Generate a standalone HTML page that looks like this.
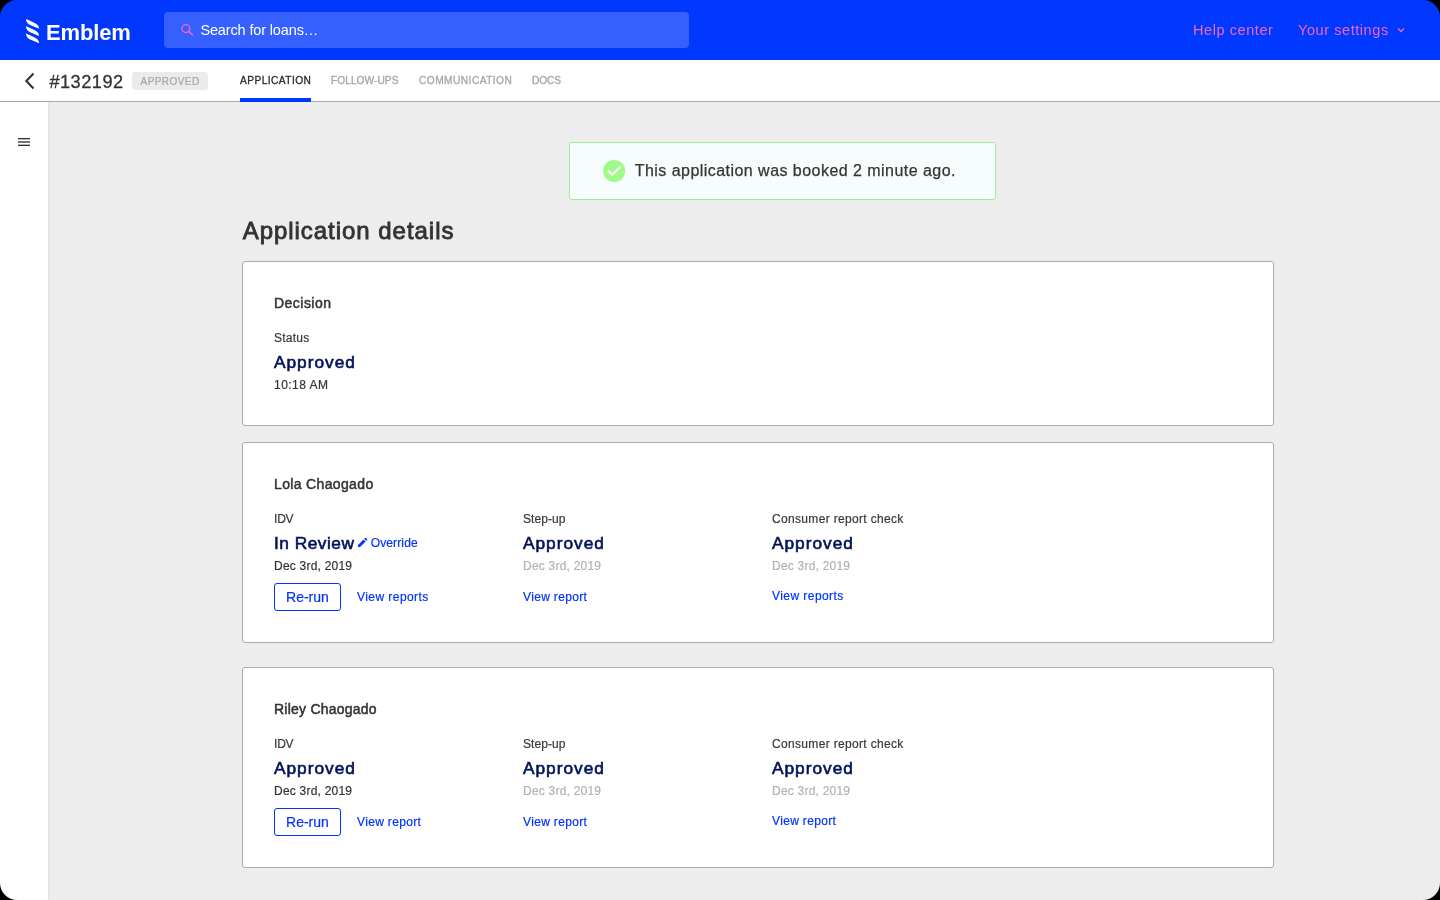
<!DOCTYPE html>
<html>
<head>
<meta charset="utf-8">
<title>Emblem - Application #132192</title>
<style>
  * { box-sizing: border-box; margin: 0; padding: 0; }
  html, body { width: 1440px; height: 900px; background: #000; overflow: hidden; }
  body { font-family: "Liberation Sans", sans-serif; color: #333; }
  .frame { will-change: transform; position: absolute; left: 0; top: 0; width: 1440px; height: 900px; }
  .contentbg { position: absolute; left: 48px; top: 102px; width: 1392px; height: 798px; background: #ededed; border-radius: 0 0 17px 0; }
  .abs { position: absolute; white-space: nowrap; line-height: 1; }

  /* top bar */
  .topbar { position: absolute; left: 0; top: 0; width: 1440px; height: 60px; background: #0038ff; border-radius: 17px 17px 0 0; }
  .logo-bg { position: absolute; left: 13px; top: 12px; width: 142px; height: 36px; background: #0137fc; }
  .search { position: absolute; left: 164.4px; top: 12px; width: 524.5px; height: 35.8px; border-radius: 4px; background: #3560ff; }
  .pink { color: #f765c6; }

  /* sub nav */
  .subnav { position: absolute; left: 0; top: 60px; width: 1440px; height: 42px; background: #fff; border-bottom: 1px solid #a9a9a9; }
  .badge { position: absolute; left: 132px; top: 12px; width: 76px; height: 18px; border-radius: 3px; background: #ebebeb; }
  .tab { font-size: 10.2px; color: #a6a6a6; -webkit-text-stroke: 0.3px #a6a6a6; }
  .tab.active { color: #2b2b2b; -webkit-text-stroke: 0.3px #2b2b2b; }
  .tabline { position: absolute; left: 240px; top: 38px; width: 71px; height: 4px; background: #0036ff; }

  /* side bar */
  .sidebar { position: absolute; left: 0; top: 102px; width: 48px; height: 798px; border-radius: 0 0 0 17px; background: #fff; box-shadow: 1px 0 2px rgba(40,40,70,0.068); }

  /* banner */
  .banner { position: absolute; left: 569px; top: 142px; width: 427px; height: 58px; border: 1px solid #9df08f; border-radius: 3px; background: #f7fdfd; }

  /* cards */
  .card { position: absolute; left: 242px; width: 1032px; background: #fff; border: 1px solid #ababab; border-radius: 3px; }
  .h { font-size: 14px; color: #333; -webkit-text-stroke: 0.5px #333; }
  .lbl { font-size: 12px; color: #383838; -webkit-text-stroke: 0.2px #383838; }
  .val { font-size: 17.3px; color: #00125a; -webkit-text-stroke: 0.62px #00125a; margin-top: 0.5px; }
  .date { font-size: 12px; color: #333; -webkit-text-stroke: 0.2px #333; }
  .date.dim { color: #b2b2b2; -webkit-text-stroke: 0.2px #b2b2b2; }
  .link { font-size: 12px; color: #0033ff; -webkit-text-stroke: 0.2px #0033ff; }
  .btn { position: absolute; width: 67px; height: 28px; border: 1px solid #0033ff; border-radius: 3px; background: #fff; }
</style>
</head>
<body>
<div class="frame">
  <div class="contentbg"></div>

  <!-- TOP BAR -->
  <div class="topbar">
    <div class="logo-bg"></div>
    <svg class="abs" style="left:26px;top:19px" width="14" height="25" viewBox="0 0 14 25">
      <path fill="#fff" d="M0,0 C5,2.3 9,3.9 11,5.4 C12.6,6.6 13,8 13,9.6 C9,7.9 5,6.6 2.8,5.2 C0.7,3.8 0,2 0,0 Z"/>
      <path fill="#fff" transform="translate(0 7.3)" d="M0,0 C5,2.3 9,3.9 11,5.4 C12.6,6.6 13,8 13,9.6 C9,7.9 5,6.6 2.8,5.2 C0.7,3.8 0,2 0,0 Z"/>
      <path fill="#fff" transform="translate(0 14.6)" d="M0,0 C5,2.3 9,3.9 11,5.4 C12.6,6.6 13,8 13,9.6 C9,7.9 5,6.6 2.8,5.2 C0.7,3.8 0,2 0,0 Z"/>
    </svg>
    <div class="abs" style="left:46px;top:21.6px;font-size:22px;font-weight:bold;color:#fff;letter-spacing:-0.15px">Emblem</div>
    <div class="search">
      <svg class="abs" style="left:16px;top:11px" width="15" height="15" viewBox="0 0 15 15">
        <circle cx="5.9" cy="5.6" r="3.95" fill="none" stroke="#f765c6" stroke-width="1.35"/>
        <path d="M8.7 8.4 L12.6 12.0" stroke="#f765c6" stroke-width="1.5" stroke-linecap="round"/>
      </svg>
      <div class="abs" style="left:36px;top:11px;font-size:14.5px;color:#fff;letter-spacing:-0.14px">Search for loans…</div>
    </div>
    <div class="abs pink" style="left:1193px;top:23px;font-size:14.5px;letter-spacing:0.57px">Help center</div>
    <div class="abs pink" style="left:1298px;top:23px;font-size:14.5px;letter-spacing:0.57px">Your settings</div>
    <svg class="abs" style="left:1396px;top:26px" width="10" height="8" viewBox="0 0 10 8">
      <path d="M2 2.5 L5 5.5 L8 2.5" fill="none" stroke="#f765c6" stroke-width="1.3"/>
    </svg>
  </div>

  <!-- SUB NAV -->
  <div class="subnav">
    <svg class="abs" style="left:23px;top:11px" width="14" height="20" viewBox="0 0 14 20">
      <path d="M10.5 2.5 L3.3 10 L10.5 17.5" fill="none" stroke="#333" stroke-width="2.05"/>
    </svg>
    <div class="abs" style="left:49.4px;top:12.6px;font-size:18.2px;color:#333;-webkit-text-stroke:0.3px #333;letter-spacing:0.5px">#132192</div>
    <div class="badge"></div>
    <div class="abs" style="left:140.6px;top:17.2px;font-size:10px;color:#a6a6a6;-webkit-text-stroke:0.2px #a6a6a6;letter-spacing:0.42px">APPROVED</div>
    <div class="abs tab active" style="left:240px;top:16.2px;letter-spacing:0.43px">APPLICATION</div>
    <div class="abs tab" style="left:331px;top:16.2px;letter-spacing:0.03px">FOLLOW-UPS</div>
    <div class="abs tab" style="left:419px;top:16.2px;letter-spacing:0.44px">COMMUNICATION</div>
    <div class="abs tab" style="left:532px;top:16.2px;letter-spacing:-0.17px">DOCS</div>
    <div class="tabline"></div>
  </div>

  <!-- SIDE BAR -->
  <div class="sidebar">
    <svg class="abs" style="left:18px;top:36px" width="12" height="8" viewBox="0 0 12 8">
      <rect x="0" y="0" width="12" height="1.333" fill="#2f2f2f"/>
      <rect x="0" y="3.333" width="12" height="1.333" fill="#2f2f2f"/>
      <rect x="0" y="6.667" width="12" height="1.333" fill="#2f2f2f"/>
    </svg>
  </div>

  <!-- BANNER -->
  <div class="banner">
    <svg class="abs" style="left:32px;top:16px" width="24" height="24" viewBox="0 0 24 24">
      <circle cx="12.2" cy="11.9" r="11" fill="#9dfa8b"/>
      <path d="M6.0 11.6 L10.2 15.8 L18.6 7.4" fill="none" stroke="#fff" stroke-width="2.1"/>
    </svg>
    <div class="abs" style="left:64.7px;top:19.5px;font-size:16px;color:#353535;-webkit-text-stroke:0.25px #353535;letter-spacing:0.46px">This application was booked 2 minute ago.</div>
  </div>

  <!-- TITLE -->
  <div class="abs" style="left:242.7px;top:219px;font-size:24px;color:#333;-webkit-text-stroke:0.85px #333;letter-spacing:0.96px">Application details</div>

  <!-- CARD 1 -->
  <div class="card" style="top:261px;height:165px">
    <div class="abs h" style="left:31px;top:34.3px;letter-spacing:0.47px">Decision</div>
    <div class="abs lbl" style="left:31px;top:70px;letter-spacing:0.25px">Status</div>
    <div class="abs val" style="left:31px;top:91px;letter-spacing:0.98px">Approved</div>
    <div class="abs date" style="left:31px;top:117px;letter-spacing:0.46px">10:18 AM</div>
  </div>

  <!-- CARD 2 -->
  <div class="card" style="top:442px;height:201px">
    <div class="abs h" style="left:31px;top:34.3px;letter-spacing:0.35px">Lola Chaogado</div>

    <div class="abs lbl" style="left:31px;top:70px;letter-spacing:-0.2px">IDV</div>
    <div class="abs val" style="left:31px;top:91px;letter-spacing:0.5px">In Review</div>
    <svg class="abs" style="left:114px;top:94px" width="11" height="11" viewBox="0 0 11 11">
      <path fill="#0033ff" d="M1 8 L1 10 L3 10 L8.6 4.4 L6.6 2.4 Z M9.2 3.8 L7.2 1.8 L8.1 0.9 C8.4 0.6 8.8 0.6 9.1 0.9 L10.1 1.9 C10.4 2.2 10.4 2.6 10.1 2.9 Z"/>
    </svg>
    <div class="abs link" style="left:127.7px;top:94px;letter-spacing:0.13px">Override</div>
    <div class="abs date" style="left:31px;top:117px;letter-spacing:0.22px">Dec 3rd, 2019</div>
    <div class="btn" style="left:31px;top:140px"></div>
    <div class="abs link" style="left:43px;top:147px;font-size:14px;letter-spacing:0.02px">Re-run</div>
    <div class="abs link" style="left:114px;top:148px;letter-spacing:0.44px">View reports</div>

    <div class="abs lbl" style="left:280px;top:70px;letter-spacing:0.07px">Step-up</div>
    <div class="abs val" style="left:280px;top:91px;letter-spacing:0.98px">Approved</div>
    <div class="abs date dim" style="left:280px;top:117px;letter-spacing:0.22px">Dec 3rd, 2019</div>
    <div class="abs link" style="left:280px;top:148px;letter-spacing:0.34px">View report</div>

    <div class="abs lbl" style="left:529px;top:70px;letter-spacing:0.33px">Consumer report check</div>
    <div class="abs val" style="left:529px;top:91px;letter-spacing:0.98px">Approved</div>
    <div class="abs date dim" style="left:529px;top:117px;letter-spacing:0.22px">Dec 3rd, 2019</div>
    <div class="abs link" style="left:529px;top:147px;letter-spacing:0.44px">View reports</div>
  </div>

  <!-- CARD 3 -->
  <div class="card" style="top:667px;height:201px">
    <div class="abs h" style="left:31px;top:34.3px;letter-spacing:0.23px">Riley Chaogado</div>

    <div class="abs lbl" style="left:31px;top:70px;letter-spacing:-0.2px">IDV</div>
    <div class="abs val" style="left:31px;top:91px;letter-spacing:0.98px">Approved</div>
    <div class="abs date" style="left:31px;top:117px;letter-spacing:0.22px">Dec 3rd, 2019</div>
    <div class="btn" style="left:31px;top:140px"></div>
    <div class="abs link" style="left:43px;top:147px;font-size:14px;letter-spacing:0.02px">Re-run</div>
    <div class="abs link" style="left:114px;top:148px;letter-spacing:0.34px">View report</div>

    <div class="abs lbl" style="left:280px;top:70px;letter-spacing:0.07px">Step-up</div>
    <div class="abs val" style="left:280px;top:91px;letter-spacing:0.98px">Approved</div>
    <div class="abs date dim" style="left:280px;top:117px;letter-spacing:0.22px">Dec 3rd, 2019</div>
    <div class="abs link" style="left:280px;top:148px;letter-spacing:0.34px">View report</div>

    <div class="abs lbl" style="left:529px;top:70px;letter-spacing:0.33px">Consumer report check</div>
    <div class="abs val" style="left:529px;top:91px;letter-spacing:0.98px">Approved</div>
    <div class="abs date dim" style="left:529px;top:117px;letter-spacing:0.22px">Dec 3rd, 2019</div>
    <div class="abs link" style="left:529px;top:147px;letter-spacing:0.34px">View report</div>
  </div>

</div>
</body>
</html>
